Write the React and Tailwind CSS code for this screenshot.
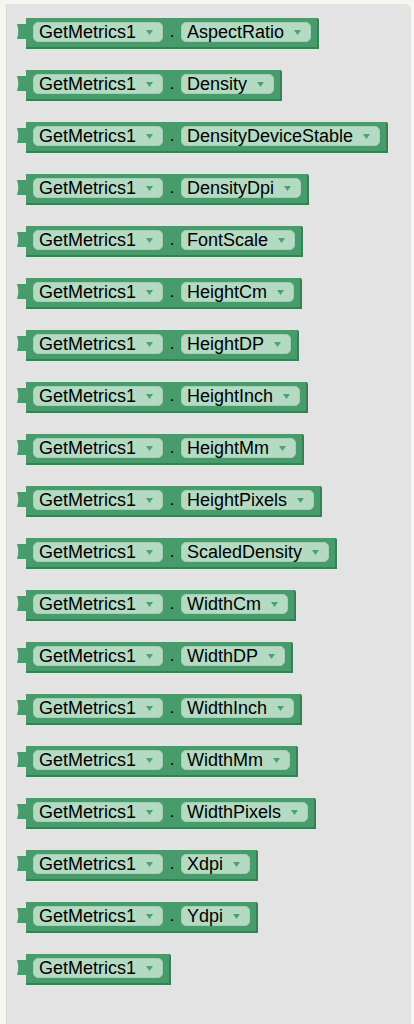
import React from "react"

const props = [
  "AspectRatio",
  "Density",
  "DensityDeviceStable",
  "DensityDpi",
  "FontScale",
  "HeightCm",
  "HeightDP",
  "HeightInch",
  "HeightMm",
  "HeightPixels",
  "ScaledDensity",
  "WidthCm",
  "WidthDP",
  "WidthInch",
  "WidthMm",
  "WidthPixels",
  "Xdpi",
  "Ydpi",
  null,
]

function Tab() {
  return (
    <svg className="w-[10px] h-[15px] mt-[6px] shrink-0" viewBox="0 0 10 15">
      <path d="M10 0 L1 0 Q3.5 7.5 1 15 L10 15 Z" fill="#489c6c" />
    </svg>
  )
}

function Pill({ label }) {
  return (
    <div className="h-[20px] flex items-center pl-[5px] pr-[9px] rounded-[5px] bg-[#b4dac3] border border-[#a3cfb4] text-black text-[18px] leading-[20px]">
      <span>{label}</span>
      <svg className="w-[7px] h-[5px] ml-[10px]" viewBox="0 0 7 5">
        <path d="M0 0 L7 0 L3.5 5 Z" fill="#4f9f72" />
      </svg>
    </div>
  )
}

function Block({ prop }) {
  return (
    <div className="flex items-start">
      <Tab />
      <div className="h-[31px] flex items-start pt-[4px] pl-[7px] pr-[6px] bg-[#489c6c] border-b-2 border-r-2 border-[#3a7d56] rounded-tr-[2px]">
        <Pill label="GetMetrics1" />
        {prop && (
          <>
            <span className="w-[18px] text-center text-black text-[17px] leading-[20px]">.</span>
            <Pill label={prop} />
          </>
        )}
      </div>
    </div>
  )
}

export default function App() {
  return (
    <div className="w-[414px] h-[1024px] bg-[#f6f6f1] pt-[4px] pl-[6px] pr-[3px] overflow-hidden" style={{ fontFamily: '"Liberation Sans", Arial, sans-serif' }}>
      <div className="h-full bg-[#e3e3e3] rounded-tr-[6px] border-l border-[#d8d8d4] pt-[14px] pl-[9px] flex flex-col gap-[21px]">
        {props.map((p, i) => (
          <Block key={i} prop={p} />
        ))}
      </div>
    </div>
  )
}
